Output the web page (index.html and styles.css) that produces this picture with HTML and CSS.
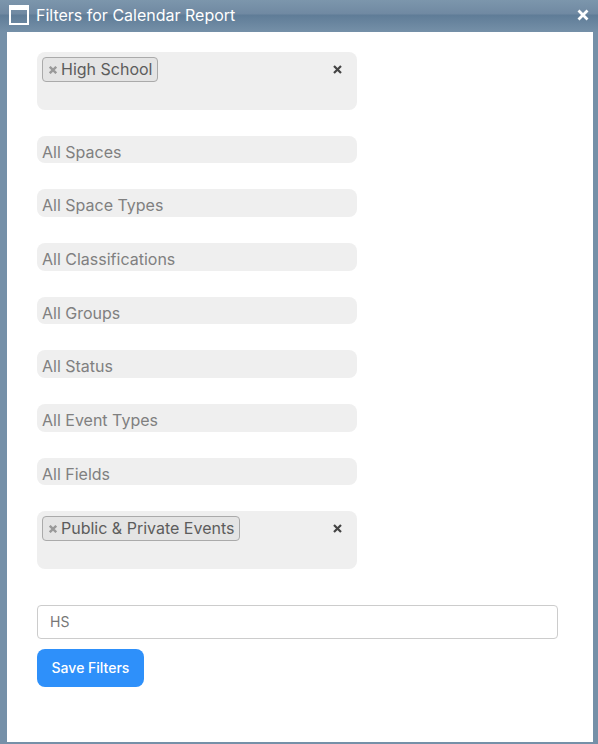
FILE: index.html
```html
<!DOCTYPE html>
<html lang="en">
<head>
    <meta charset="UTF-8">
    <meta name="viewport" content="width=device-width, initial-scale=1.0">
    <title>Filters for Calendar Report</title>
    <link rel="stylesheet" href="styles.css">
</head>
<body>
    <div class="dialog">
        <div class="titlebar">
            <span class="title-icon"></span>
            <span class="title-text">Filters for Calendar Report</span>
            <svg class="title-close" viewBox="0 0 12 12" width="12" height="12">
                <path d="M1.5 1.5 L10.5 10.5 M10.5 1.5 L1.5 10.5" stroke="#fff" stroke-width="2.8" fill="none"/>
            </svg>
        </div>
        <div class="content">
            <div class="select multi">
                <span class="tag">
                    <svg class="tag-x" viewBox="0 0 8 8" width="8" height="8"><path d="M0.8 0.8 L7.2 7.2 M7.2 0.8 L0.8 7.2"/></svg>
                    High School
                </span>
                <svg class="clear" viewBox="0 0 9 9" width="9" height="9"><path d="M1 1 L8 8 M8 1 L1 8"/></svg>
            </div>
            <div class="select">All Spaces</div>
            <div class="select">All Space Types</div>
            <div class="select">All Classifications</div>
            <div class="select">All Groups</div>
            <div class="select">All Status</div>
            <div class="select">All Event Types</div>
            <div class="select">All Fields</div>
            <div class="select multi">
                <span class="tag">
                    <svg class="tag-x" viewBox="0 0 8 8" width="8" height="8"><path d="M0.8 0.8 L7.2 7.2 M7.2 0.8 L0.8 7.2"/></svg>
                    Public &amp; Private Events
                </span>
                <svg class="clear" viewBox="0 0 9 9" width="9" height="9"><path d="M1 1 L8 8 M8 1 L1 8"/></svg>
            </div>
            <input type="text" class="name-input" value="HS">
            <button class="btn">Save Filters</button>
        </div>
    </div>
</body>
</html>
```

FILE: styles.css
```css
html, body {
    margin: 0;
    padding: 0;
}
body {
    font-family: Inter, "Liberation Sans", sans-serif;
    background-color: #7590a8;
}
.dialog {
    width: 598px;
    height: 744px;
    display: flex;
    flex-direction: column;
    overflow: hidden;
}
.titlebar {
    height: 32px;
    flex: none;
    box-sizing: border-box;
    display: flex;
    align-items: flex-start;
    padding: 5px 9px 0 9px;
    background: linear-gradient(to bottom, #7c96ac 0, #7089a2 14px, #5f7c97 15px, #7590a8 32px);
    color: #fff;
}
.title-icon {
    width: 20px;
    height: 20px;
    box-sizing: border-box;
    border: 2px solid #fff;
    border-top-width: 5px;
    margin-right: 7px;
}
.title-text {
    font-size: 16px;
    line-height: 21px;
    flex: 1;
}
.title-close {
    margin: 4px 0 0 0;
}
.content {
    flex: 1;
    margin: 0 5px 2px 7px;
    background-color: #fff;
    padding: 20px 30px 0 30px;
}
.select {
    width: 320px;
    height: 27.67px;
    box-sizing: border-box;
    margin-bottom: 26px;
    padding: 4px 5px 0 5px;
    background-color: #efefef;
    border-radius: 8px;
    color: #808080;
    font-size: 16px;
    line-height: 24px;
    position: relative;
}
.select.multi {
    height: 57.67px;
}
.tag {
    display: inline-flex;
    align-items: center;
    box-sizing: border-box;
    height: 25px;
    padding: 0 5px 0 6px;
    margin-top: 1px;
    background-color: #e4e4e4;
    border: 1px solid #aaa;
    border-radius: 4px;
    color: #5c5c5c;
    line-height: 23px;
    vertical-align: top;
}
.tag-x {
    margin-right: 4px;
    stroke: #999;
    stroke-width: 2.4;
    fill: none;
}
.clear {
    position: absolute;
    top: 13px;
    right: 15.5px;
    stroke: #444;
    stroke-width: 2.2;
    fill: none;
}
.name-input {
    display: block;
    width: 521px;
    height: 34px;
    box-sizing: border-box;
    margin: 36px 0 10px 0;
    padding: 0 12px;
    border: 1px solid #ccc;
    border-radius: 4px;
    font-family: Inter, "Liberation Sans", sans-serif;
    font-size: 14px;
    color: #777;
}
.btn {
    display: block;
    width: 107px;
    height: 38px;
    padding: 0;
    background-color: #2e90fa;
    color: white;
    border: none;
    border-radius: 8px;
    font-family: Inter, "Liberation Sans", sans-serif;
    font-size: 14px;
    font-weight: 500;
    cursor: pointer;
}
```
